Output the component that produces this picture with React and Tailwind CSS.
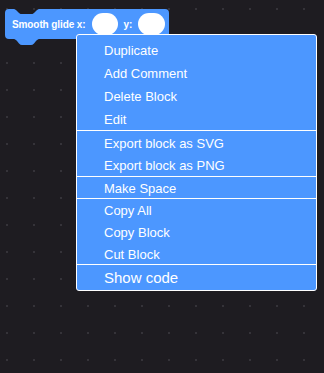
const menuGroups = [
  { items: ['Duplicate', 'Add Comment', 'Delete Block', 'Edit'], heights: ['h-[23px]'], top: 'pt-[3px]' },
  { items: ['Export block as SVG', 'Export block as PNG'], heights: ['h-[22.5px]'] },
  { items: ['Make Space'], heights: ['h-[21px]'] },
  { items: ['Copy All', 'Copy Block', 'Cut Block'], heights: ['h-[22px]', 'h-[22px]', 'h-[21px]'] },
];

function BlockShape() {
  return (
    <svg className="absolute left-0 top-0 overflow-visible" width="164" height="30" viewBox="0 0 164 30">
      <path
        d="M0 4A4 4 0 0 1 4 0H9C10 0 11 1 12 2L14 4C15 5 16 5 17 5H26C27 5 28 5 29 4L31 2C32 1 33 0 34 0H160A4 4 0 0 1 164 4V26A4 4 0 0 1 160 30H34C33 30 32 31 31 32L29 34.5C28 35.5 27 36 26 36H17C16 36 15 35.5 14 34.5L12 32C11 31 10 30 9 30H4A4 4 0 0 1 0 26Z"
        fill="#4c97ff"
      />
    </svg>
  );
}

function GlideBlock() {
  return (
    <div className="relative ml-[5px] h-[30px] w-[164px]">
      <BlockShape />
      <div className="relative flex h-full items-center pl-[7px] text-[10px] font-bold tracking-[-0.1px] text-white">
        <span>Smooth glide x:</span>
        <span className="ml-[6px] h-[22px] w-[26px] rounded-full bg-white" />
        <span className="ml-[6px]">y:</span>
        <span className="ml-[6px] h-[22px] w-[27px] rounded-full bg-white" />
      </div>
    </div>
  );
}

function ContextMenu() {
  return (
    <div className="absolute left-[76px] top-[34px] flex w-[241px] flex-col rounded-[3px] border border-white bg-[#4c97ff] text-[13px] text-white">
      {menuGroups.map((group, groupIndex) => (
        <div key={groupIndex} className="flex flex-col">
          <div className={`flex flex-col ${group.top || ''}`}>
            {group.items.map((label, index) => (
              <div
                key={label}
                className={`flex items-center pl-[27px] pt-[2px] ${group.heights[index] || group.heights[0]}`}
              >
                {label}
              </div>
            ))}
          </div>
          <div className="h-px bg-white" />
        </div>
      ))}
      <div className="flex h-[25px] items-center pl-[27px] pt-[2px] text-[15px]">Show code</div>
    </div>
  );
}

export default function App() {
  return (
    <div
      className="relative h-[373px] w-[324px] overflow-hidden bg-[#1e1c21] bg-[radial-gradient(circle_at_7px_9px,#353339_1px,transparent_1.3px)] pt-[9px] [background-size:27px_27px] font-['Liberation_Sans',Arial,sans-serif]"
    >
      <GlideBlock />
      <ContextMenu />
    </div>
  );
}
